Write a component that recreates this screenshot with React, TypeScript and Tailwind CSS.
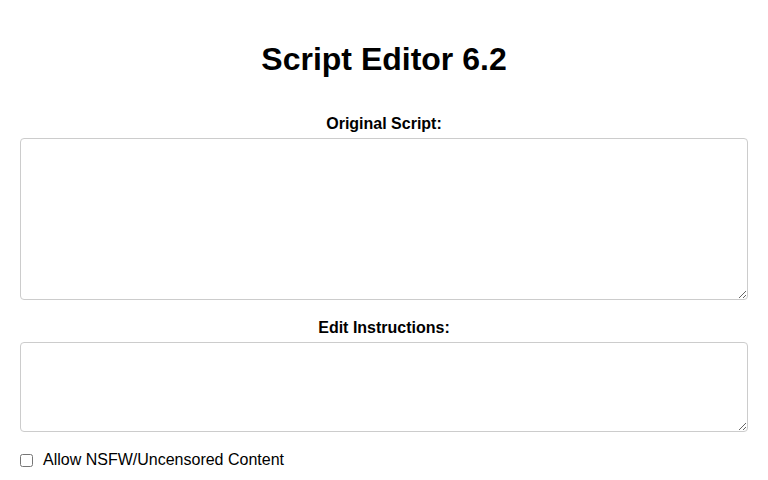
export default function App() {
  return (
    <div className="min-h-screen w-full bg-white px-5 pt-[41px] font-['Liberation_Sans',Arial,sans-serif] text-black">
      <h1 className="text-center text-[32px] font-bold leading-[37px]">Script Editor 6.2</h1>

      <div className="mt-[37px]">
        <label className="block text-center text-base font-bold leading-[18px]">Original Script:</label>
        <textarea className="mt-[5px] block h-[162px] w-full rounded border border-[#ccc] p-2.5 text-sm outline-none" />
      </div>

      <div className="mt-[19px]">
        <label className="block text-center text-base font-bold leading-[18px]">Edit Instructions:</label>
        <textarea className="mt-[5px] block h-[90px] w-full rounded border border-[#ccc] p-2.5 text-sm outline-none" />
      </div>

      <div className="mt-[19px] flex items-center">
        <input type="checkbox" className="m-0 h-[13px] w-[13px]" />
        <span className="ml-[10px] text-base leading-[18px]">Allow NSFW/Uncensored Content</span>
      </div>
    </div>
  );
}
